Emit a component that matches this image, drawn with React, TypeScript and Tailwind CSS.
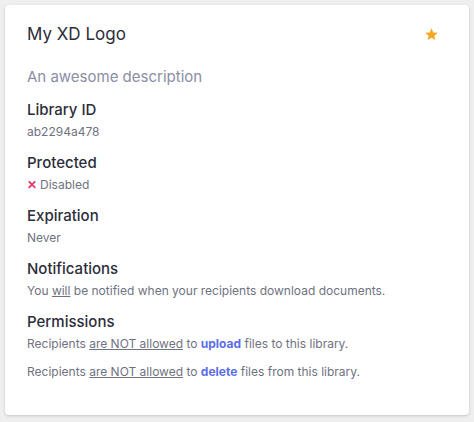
import React from 'react';

const Section = ({ title, children }: { title: string; children: React.ReactNode }) => (
  <div className="mt-[12px]">
    <h3 className="text-[15px] leading-[20px] font-medium text-[#2b2d3a]">{title}</h3>
    <div className="mt-[3px] text-[12px] leading-[18px] text-[#6f7280]">{children}</div>
  </div>
);

const App = () => {
  return (
    <div className="min-h-[422px] bg-[#efefef] p-[5px] pb-[6px] font-['Inter',sans-serif]">
      <div className="h-[410px] rounded-[4px] bg-white shadow-[0_1px_3px_rgba(0,0,0,0.18)] px-[22px] pt-[17px]">
        <div className="flex items-center justify-between">
          <h1 className="text-[17px] leading-[24px] text-[#2b2d3a]">My XD Logo</h1>
          <svg width="15" height="15" viewBox="0 0 24 24" className="mr-[8px]">
            <path
              d="M12 2l2.9 6.6 7.1.6-5.4 4.7 1.6 7-6.2-3.7-6.2 3.7 1.6-7L2 9.2l7.1-.6z"
              fill="#f5a623"
            />
          </svg>
        </div>
        <p className="mt-[20px] mb-[1px] text-[15px] leading-[22px] text-[#8a8ea3]">An awesome description</p>
        <Section title="Library ID">ab2294a478</Section>
        <Section title="Protected">
          <span className="flex items-center gap-[3px]">
            <span className="text-[#e8336b] font-bold text-[12px]">✕</span>
            Disabled
          </span>
        </Section>
        <Section title="Expiration">Never</Section>
        <Section title="Notifications">
          You <span className="underline">will</span> be notified when your recipients download documents.
        </Section>
        <Section title="Permissions">
          <p>
            Recipients <span className="underline">are NOT allowed</span> to{' '}
            <span className="font-bold text-[#5b6ee8]">upload</span> files to this library.
          </p>
          <p className="mt-[10px]">
            Recipients <span className="underline">are NOT allowed</span> to{' '}
            <span className="font-bold text-[#5b6ee8]">delete</span> files from this library.
          </p>
        </Section>
      </div>
    </div>
  );
};

export default App;
